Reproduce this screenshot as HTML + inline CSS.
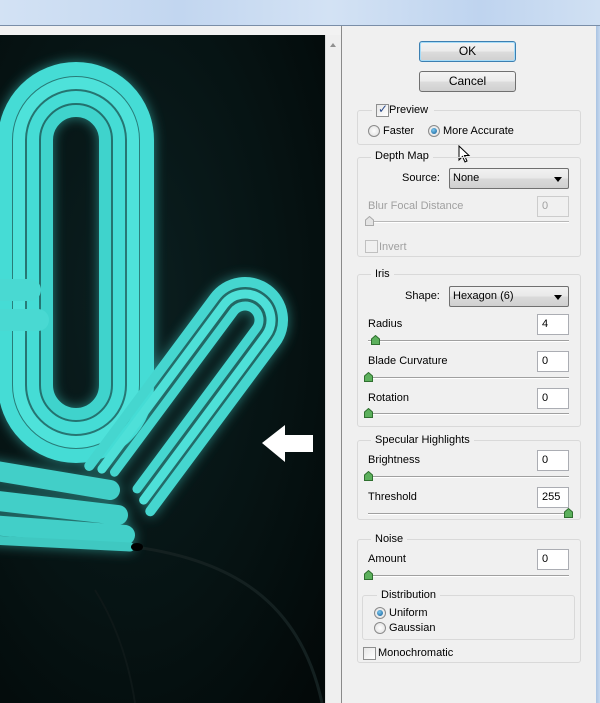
<!DOCTYPE html>
<html><head><meta charset="utf-8"><style>
*{margin:0;padding:0;box-sizing:border-box}
body{width:600px;height:703px;overflow:hidden;position:relative;background:#f0f0f0;font-family:"Liberation Sans",sans-serif;font-size:11px;color:#000}
.a{position:absolute}
.title{left:0;top:0;width:600px;height:26px;background:linear-gradient(90deg,#d3e2f4,#c2d6f0 30%,#d3e2f4 55%,#bfd4ef 80%,#d0e0f3);border-bottom:1px solid #7a8ea8}
.strip{left:0;top:26px;width:341px;height:10px;background:#f2f2f2}
.scroll{left:325px;top:35px;width:16px;height:668px;background:#efefef;border-left:1px solid #ddd}
.dlg{left:341px;top:26px;width:255px;height:677px;background:#f0f0f0;border-left:1px solid #8a8a8a}
.frame{left:596px;top:26px;width:4px;height:677px;background:linear-gradient(90deg,#aac3e2,#c5d8ef)}
.btn{width:97px;height:21px;border:1px solid #707070;border-radius:3px;background:linear-gradient(#f3f3f3,#ebebeb 50%,#dcdcdc 51%,#d0d0d0);text-align:center;line-height:19px;font-size:12px}
.grp{border:1px solid #d9d9d9;border-radius:3px}
.lg{background:#f0f0f0;padding:0 4px}
.sel{width:120px;height:21px;border:1px solid #707070;border-radius:2px;background:linear-gradient(#f2f2f2,#e8e8e8 50%,#dadada 51%,#d0d0d0);padding:3px 3px;font-size:11px}
.sel:after{content:"";position:absolute;right:6px;top:8px;border:4px solid transparent;border-top:5px solid #000;border-bottom:0}
.inp{width:32px;height:21px;border:1px solid #abadb3;background:#fff;padding:3px 4px;font-size:11px}
.line{height:2px;border-top:1px solid #a0a0a0;border-bottom:1px solid #fff;width:201px}
.th{width:9px;height:10px}
.cb{width:13px;height:13px;border:1px solid #8e8f8f;background:linear-gradient(135deg,#e6e6e6,#fff)}
.rd{width:12px;height:12px;border-radius:50%;border:1px solid #8a8a8a;background:radial-gradient(#fff,#dcdcdc)}
.rd.on:after{content:"";position:absolute;left:2px;top:2px;width:6px;height:6px;border-radius:50%;background:radial-gradient(circle at 40% 35%,#7cc8f0,#0f5a94)}
.g{color:#a0a0a0}
</style></head><body>
<div class="a title"></div>
<div class="a strip"></div>

<svg class="a" style="left:0;top:35px" width="325" height="668" viewBox="0 35 325 668">
<defs>
<radialGradient id="bg" cx="0.4" cy="0.4" r="0.8"><stop offset="0" stop-color="#0b1f20"/><stop offset="0.6" stop-color="#061313"/><stop offset="1" stop-color="#030909"/></radialGradient>
<filter id="gl" x="-30%" y="-30%" width="160%" height="160%"><feGaussianBlur stdDeviation="6"/></filter>
<g id="tubes" fill="none" stroke-linecap="round">
<path d="M5,385 L5,140 A71,71 0 0 1 147,140 L147,385 A71,71 0 0 1 5,385" stroke="#45dcd5" stroke-width="14"/>
<path d="M19,385 L19,140 A57,57 0 0 1 133,140 L133,385 A57,57 0 0 1 19,385" stroke="#4ee2da" stroke-width="12"/>
<path d="M33,385 L33,140 A43,43 0 0 1 119,140 L119,385 A43,43 0 0 1 33,385" stroke="#45dcd5" stroke-width="12"/>
<path d="M47,385 L47,140 A29,29 0 0 1 105,140 L105,385 A29,29 0 0 1 47,385" stroke="#3fd3cc" stroke-width="12"/>
<path d="M-10,290 L30,290 M-10,320 L38,320" stroke="#49d9d2" stroke-width="22"/>
<path d="M-10,470 L110,490 M-10,500 L118,515 M-10,525 L125,535" stroke="#42cfc8" stroke-width="20"/>
<path d="M-10,540 L130,547" stroke="#3fc8c1" stroke-width="9"/>
<g transform="translate(245,320) rotate(36.6)">
<path d="M-38,210 L-38,0 A38,38 0 0 1 38,0 L38,210" stroke="#45d6cf" stroke-width="10"/>
<path d="M-26,205 L-26,0 A26,26 0 0 1 26,0 L26,205" stroke="#4ee0d8" stroke-width="9"/>
<path d="M-14,200 L-14,0 A14,14 0 0 1 14,0 L14,200" stroke="#45d6cf" stroke-width="9"/>
</g>
</g>
</defs>
<rect x="0" y="35" width="325" height="668" fill="url(#bg)"/>
<path d="M135,547 C230,560 300,600 322,703" stroke="#142020" stroke-width="3" fill="none"/>
<path d="M95,590 C120,630 130,670 135,703" stroke="#0e1818" stroke-width="2" fill="none"/>
<use href="#tubes" filter="url(#gl)" opacity="0.55"/>
<use href="#tubes"/>
<ellipse cx="137" cy="547" rx="6" ry="4" fill="#000"/>
<path d="M262,443 L285,425 L285,435 L313,435 L313,452 L285,452 L285,462 Z" fill="#fff"/>
</svg>
<div class="a scroll"><div class="a" style="left:4px;top:8px;border:3px solid transparent;border-bottom:4px solid #909090;border-top:0"></div></div>
<div class="a dlg"></div>
<div class="a frame"></div>

<div class="a btn" style="left:419px;top:41px;border-color:#3c7fb1;box-shadow:inset 0 0 0 1px #a6dcf8">OK</div>
<div class="a btn" style="left:419px;top:71px">Cancel</div>

<div class="a grp" style="left:357px;top:110px;width:224px;height:35px"></div>
<div class="a lg" style="left:372px;top:103px;height:14px;width:62px"></div>
<div class="a cb" style="left:376px;top:104px"><span class="a" style="left:1px;top:-3px;font-size:12px;color:#2a4a8a">✓</span></div>
<div class="a" style="left:389px;top:104px">Preview</div>
<div class="a rd" style="left:368px;top:125px"></div><div class="a" style="left:383px;top:125px">Faster</div>
<div class="a rd on" style="left:428px;top:125px"></div><div class="a" style="left:443px;top:125px">More Accurate</div>
<svg class="a" style="left:458px;top:145px" width="14" height="20"><path d="M1,1 L1,15 L4.5,11.5 L7,17 L9,16 L6.5,10.5 L11,10.5 Z" fill="#fff" stroke="#000"/></svg>

<div class="a grp" style="left:357px;top:157px;width:224px;height:100px"></div>
<div class="a lg" style="left:371px;top:150px">Depth Map</div>
<div class="a" style="left:402px;top:172px">Source:</div>
<div class="a sel" style="left:449px;top:168px">None</div>
<div class="a g" style="left:368px;top:200px">Blur Focal Distance</div>
<div class="a inp g" style="left:537px;top:196px;border-color:#ccc;background:#f0f0f0">0</div>
<div class="a line" style="left:368px;top:221px;border-top-color:#b8b8b8"></div>
<svg class="a th" style="left:365px;top:216px"><path d="M4.5,0.5 L8.5,4 L8.5,9.5 L0.5,9.5 L0.5,4Z" fill="#e4e4e4" stroke="#aaa"/></svg>
<div class="a cb" style="left:365px;top:240px;border-color:#c0c0c0;background:#f0f0f0"></div>
<div class="a g" style="left:379px;top:241px">Invert</div>

<div class="a grp" style="left:357px;top:274px;width:224px;height:153px"></div>
<div class="a lg" style="left:371px;top:268px">Iris</div>
<div class="a" style="left:405px;top:290px">Shape:</div>
<div class="a sel" style="left:449px;top:286px">Hexagon (6)</div>

<div class="a" style="left:368px;top:318px">Radius</div>
<div class="a inp" style="left:537px;top:314px">4</div>
<div class="a line" style="left:368px;top:340px"></div>
<svg class="a th" style="left:371px;top:335px"><path d="M4.5,0.5 L8.5,4 L8.5,9.5 L0.5,9.5 L0.5,4Z" fill="#5cb05c" stroke="#2f6f2f"/></svg>
<div class="a" style="left:368px;top:355px">Blade Curvature</div>
<div class="a inp" style="left:537px;top:351px">0</div>
<div class="a line" style="left:368px;top:377px"></div>
<svg class="a th" style="left:364px;top:372px"><path d="M4.5,0.5 L8.5,4 L8.5,9.5 L0.5,9.5 L0.5,4Z" fill="#5cb05c" stroke="#2f6f2f"/></svg>
<div class="a" style="left:368px;top:392px">Rotation</div>
<div class="a inp" style="left:537px;top:388px">0</div>
<div class="a line" style="left:368px;top:413px"></div>
<svg class="a th" style="left:364px;top:408px"><path d="M4.5,0.5 L8.5,4 L8.5,9.5 L0.5,9.5 L0.5,4Z" fill="#5cb05c" stroke="#2f6f2f"/></svg>

<div class="a grp" style="left:357px;top:440px;width:224px;height:80px"></div>
<div class="a lg" style="left:371px;top:434px">Specular Highlights</div>
<div class="a" style="left:368px;top:454px">Brightness</div>
<div class="a inp" style="left:537px;top:450px">0</div>
<div class="a line" style="left:368px;top:476px"></div>
<svg class="a th" style="left:364px;top:471px"><path d="M4.5,0.5 L8.5,4 L8.5,9.5 L0.5,9.5 L0.5,4Z" fill="#5cb05c" stroke="#2f6f2f"/></svg>
<div class="a" style="left:368px;top:491px">Threshold</div>
<div class="a inp" style="left:537px;top:487px">255</div>
<div class="a line" style="left:368px;top:513px"></div>
<svg class="a th" style="left:564px;top:508px"><path d="M4.5,0.5 L8.5,4 L8.5,9.5 L0.5,9.5 L0.5,4Z" fill="#5cb05c" stroke="#2f6f2f"/></svg>

<div class="a grp" style="left:357px;top:539px;width:224px;height:124px"></div>
<div class="a lg" style="left:371px;top:533px">Noise</div>
<div class="a" style="left:368px;top:553px">Amount</div>
<div class="a inp" style="left:537px;top:549px">0</div>
<div class="a line" style="left:368px;top:575px"></div>
<svg class="a th" style="left:364px;top:570px"><path d="M4.5,0.5 L8.5,4 L8.5,9.5 L0.5,9.5 L0.5,4Z" fill="#5cb05c" stroke="#2f6f2f"/></svg>
<div class="a grp" style="left:362px;top:595px;width:213px;height:45px"></div>
<div class="a lg" style="left:377px;top:589px">Distribution</div>
<div class="a rd on" style="left:374px;top:607px"></div><div class="a" style="left:389px;top:607px">Uniform</div>
<div class="a rd" style="left:374px;top:622px"></div><div class="a" style="left:389px;top:622px">Gaussian</div>
<div class="a cb" style="left:363px;top:647px"></div>
<div class="a" style="left:378px;top:647px">Monochromatic</div>
</body></html>
